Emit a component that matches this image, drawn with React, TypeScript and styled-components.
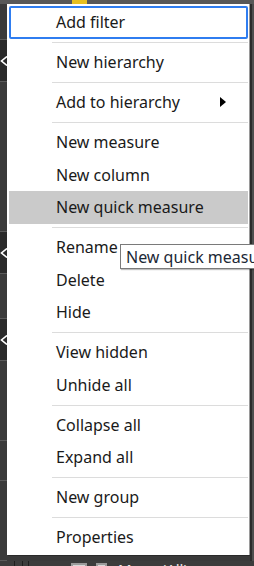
import React from 'react';
import styled, { createGlobalStyle } from 'styled-components';

const GlobalStyle = createGlobalStyle`
  html, body {
    margin: 0;
    padding: 0;
    background: #3a3a3a;
  }
  * {
    box-sizing: border-box;
  }
`;

type Entry = { label: string; submenu?: boolean; focused?: boolean; hovered?: boolean } | 'sep';

const entries: Entry[] = [
  { label: 'Add filter', focused: true },
  'sep',
  { label: 'New hierarchy' },
  'sep',
  { label: 'Add to hierarchy', submenu: true },
  'sep',
  { label: 'New measure' },
  { label: 'New column' },
  { label: 'New quick measure', hovered: true },
  'sep',
  { label: 'Rename' },
  { label: 'Delete' },
  { label: 'Hide' },
  'sep',
  { label: 'View hidden' },
  { label: 'Unhide all' },
  'sep',
  { label: 'Collapse all' },
  { label: 'Expand all' },
  'sep',
  { label: 'New group' },
  'sep',
  { label: 'Properties' },
];

const Page = styled.div`
  position: relative;
  width: 254px;
  height: 566px;
  overflow: hidden;
  background: #3a3a3a;
  display: grid;
  grid-template-columns: 7px 1fr 4px;
  grid-template-rows: 4px 1fr 11px;
  font-family: 'Noto Sans', 'Open Sans', sans-serif;
`;

const TopStrip = styled.div`
  grid-column: 1 / 4;
  background: #585858;
  display: flex;
  padding-left: 72px;
`;

const YellowTag = styled.div`
  width: 15px;
  height: 4px;
  background: #e8c020;
`;

const LeftRail = styled.div`
  background: #2e2e2e;
  display: flex;
  flex-direction: column;
`;

const RailCell = styled.div<{ $h: number; $tone: string }>`
  height: ${p => p.$h}px;
  flex: none;
  background: ${p => p.$tone};
  border-bottom: 1px solid #5a5a5a;
  display: flex;
  align-items: center;
  overflow: hidden;
`;

const Chevron = styled.svg`
  width: 7px;
  height: 10px;
  flex: none;
`;

const Center = styled.div``;

const RightRail = styled.div`
  background: #4e4e4e;
  border-left: 2px solid #2c2c2c;
`;

const BottomStrip = styled.div`
  grid-column: 1 / 4;
  background: #3c3c3c;
  display: flex;
  align-items: flex-end;
  padding-left: 14px;
  overflow: hidden;
`;

const VLine = styled.div<{ $w: number }>`
  width: ${p => p.$w}px;
  height: 11px;
  flex: none;
  border-left: 1px solid #1e1e1e;
`;

const Square = styled.div<{ $w: number; $mr: number }>`
  width: ${p => p.$w}px;
  height: 9px;
  flex: none;
  margin-right: ${p => p.$mr}px;
  background: #d8d8d8;
  border: 2px solid #9a9a9a;
  border-bottom: none;
`;

const FieldText = styled.span`
  color: #e8e8e8;
  font-size: 15px;
  line-height: 11px;
  white-space: nowrap;
  transform: translateY(3px);
`;

const Menu = styled.div`
  position: absolute;
  left: 7px;
  top: 4px;
  width: 243px;
  height: 551px;
  background: #ffffff;
  border-right: 1px solid #9a9a9a;
  padding: 2px 1px 2px 2px;
  display: flex;
  flex-direction: column;
  box-shadow: 1px 1px 0 #2a2a2a;
`;

const Item = styled.div<{ $focused?: boolean; $hovered?: boolean }>`
  height: 32.5px;
  flex: none;
  display: flex;
  align-items: center;
  padding-left: 45px;
  padding-right: 20px;
  font-size: 16px;
  color: #1a1a1a;
  background: ${p => (p.$hovered ? '#cacaca' : 'transparent')};
  border: ${p => (p.$focused ? '2px solid #2f7df0' : '2px solid transparent')};
  border-radius: ${p => (p.$focused ? '2px' : '0')};
  white-space: nowrap;
`;

const Label = styled.span`
  flex: 1;
`;

const Arrow = styled.svg`
  width: 6px;
  height: 10px;
`;

const Separator = styled.div`
  flex: none;
  height: 1px;
  margin: 3.5px 0 3px 43px;
  background: #dcdcdc;
`;

const Tooltip = styled.div`
  position: absolute;
  left: 120px;
  top: 244px;
  height: 25px;
  padding: 0 8px 0 5px;
  background: #ffffff;
  border: 1px solid #7a7a7a;
  box-shadow: 1px 1px 1px rgba(0, 0, 0, 0.25);
  display: flex;
  align-items: center;
  font-size: 16px;
  color: #1c2836;
  white-space: nowrap;
`;

const railCells: { h: number; tone: string; chevron?: boolean }[] = [
  { h: 36, tone: '#3a3a3a' },
  { h: 42, tone: '#2a2a2a', chevron: true },
  { h: 150, tone: '#3a3a3a' },
  { h: 42, tone: '#2a2a2a', chevron: true },
  { h: 45, tone: '#3a3a3a' },
  { h: 42, tone: '#2a2a2a', chevron: true },
  { h: 80, tone: '#3a3a3a' },
  { h: 40, tone: '#3a3a3a' },
  { h: 80, tone: '#3a3a3a' },
];

export default function App() {
  return (
    <>
      <GlobalStyle />
      <Page>
        <TopStrip>
          <YellowTag />
        </TopStrip>
        <LeftRail>
          {railCells.map((c, i) => (
            <RailCell key={i} $h={c.h} $tone={c.tone}>
              {c.chevron && (
                <Chevron viewBox="0 0 7 10">
                  <path d="M7 0.5 L1.5 5 L7 9.5" fill="none" stroke="#ffffff" strokeWidth="1.6" />
                </Chevron>
              )}
            </RailCell>
          ))}
        </LeftRail>
        <Center />
        <RightRail />
        <BottomStrip>
          <VLine $w={8} />
          <VLine $w={6} />
          <VLine $w={43} />
          <Square $w={16} $mr={9} />
          <Square $w={11} $mr={11} />
          <FieldText>Mean (All)</FieldText>
        </BottomStrip>

        <Menu>
          {entries.map((e, i) =>
            e === 'sep' ? (
              <Separator key={i} />
            ) : (
              <Item key={i} $focused={e.focused} $hovered={e.hovered}>
                <Label>{e.label}</Label>
                {e.submenu && (
                  <Arrow viewBox="0 0 6 10">
                    <path d="M0 0 L6 5 L0 10 Z" fill="#000" />
                  </Arrow>
                )}
              </Item>
            )
          )}
        </Menu>

        <Tooltip>New quick measure</Tooltip>
      </Page>
    </>
  );
}
